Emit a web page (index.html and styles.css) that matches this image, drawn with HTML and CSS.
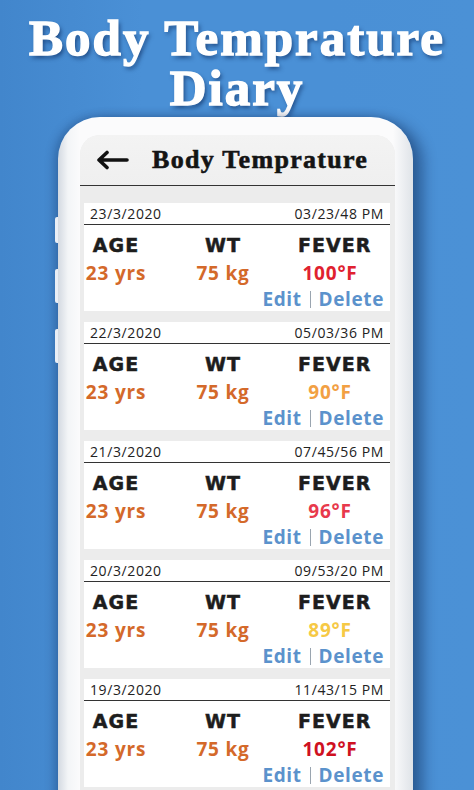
FILE: index.html
```html
<!DOCTYPE html>
<html lang="en">
<head>
    <meta charset="UTF-8">
    <meta name="viewport" content="width=device-width, initial-scale=1.0">
    <title>Body Temprature Diary</title>
    <link rel="stylesheet" href="styles.css">
</head>
<body>
    <h1 class="promo-title">
        <span class="promo-line">Body Temprature</span>
        <span class="promo-line">Diary</span>
    </h1>

    <div class="phone">
        <span class="side-button btn-one"></span>
        <span class="side-button btn-two"></span>
        <span class="side-button btn-three"></span>
        <div class="screen">
            <div class="app-bar">
                <svg class="back-arrow" width="34" height="20" viewBox="0 0 34 20">
                    <path d="M4 10 H32 M12 2.5 L4 10 L12 17.5" fill="none" stroke="#111" stroke-width="3.6" stroke-linecap="round" stroke-linejoin="round"/>
                </svg>
                <span class="app-title">Body Temprature</span>
            </div>

            <div class="entry-list">
                <div class="entry">
                    <div class="entry-head"><span>23/3/2020</span><span>03/23/48 PM</span></div>
                    <div class="entry-grid">
                        <span class="label">AGE</span><span class="label">WT</span><span class="label">FEVER</span>
                        <span class="value">23 yrs</span><span class="value">75 kg</span><span class="value fever-high">100°F</span>
                    </div>
                    <div class="actions"><span>Edit</span><span class="sep"></span><span>Delete</span></div>
                </div>

                <div class="entry">
                    <div class="entry-head"><span>22/3/2020</span><span>05/03/36 PM</span></div>
                    <div class="entry-grid">
                        <span class="label">AGE</span><span class="label">WT</span><span class="label">FEVER</span>
                        <span class="value">23 yrs</span><span class="value">75 kg</span><span class="value fever-mild">90°F</span>
                    </div>
                    <div class="actions"><span>Edit</span><span class="sep"></span><span>Delete</span></div>
                </div>

                <div class="entry">
                    <div class="entry-head"><span>21/3/2020</span><span>07/45/56 PM</span></div>
                    <div class="entry-grid">
                        <span class="label">AGE</span><span class="label">WT</span><span class="label">FEVER</span>
                        <span class="value">23 yrs</span><span class="value">75 kg</span><span class="value fever-warm">96°F</span>
                    </div>
                    <div class="actions"><span>Edit</span><span class="sep"></span><span>Delete</span></div>
                </div>

                <div class="entry">
                    <div class="entry-head"><span>20/3/2020</span><span>09/53/20 PM</span></div>
                    <div class="entry-grid">
                        <span class="label">AGE</span><span class="label">WT</span><span class="label">FEVER</span>
                        <span class="value">23 yrs</span><span class="value">75 kg</span><span class="value fever-low">89°F</span>
                    </div>
                    <div class="actions"><span>Edit</span><span class="sep"></span><span>Delete</span></div>
                </div>

                <div class="entry">
                    <div class="entry-head"><span>19/3/2020</span><span>11/43/15 PM</span></div>
                    <div class="entry-grid">
                        <span class="label">AGE</span><span class="label">WT</span><span class="label">FEVER</span>
                        <span class="value">23 yrs</span><span class="value">75 kg</span><span class="value fever-top">102°F</span>
                    </div>
                    <div class="actions"><span>Edit</span><span class="sep"></span><span>Delete</span></div>
                </div>
            </div>
        </div>
    </div>
</body>
</html>
```

FILE: styles.css
```css
body {
    margin: 0;
    height: 790px;
    overflow: hidden;
    background: linear-gradient(90deg, #4286cc 0, #4a90d6 30%, #4a90d6 70%, #4b91d6 100%);
    font-family: 'Open Sans', sans-serif;
}
.promo-title {
    margin: 13px 0 0;
    font-family: 'Liberation Serif', serif;
    font-weight: bold;
    font-size: 51px;
    letter-spacing: 2px;
    text-align: center;
    color: #fff;
    -webkit-text-stroke: 1.4px #fff;
    text-shadow: 2px 3px 4px rgba(10, 40, 90, 0.65);
}
.promo-line {
    display: block;
    height: 50px;
    line-height: 50px;
}
.phone {
    position: relative;
    width: 355px;
    margin: 4px 0 0 58px;
    padding: 18px 18px 0 22px;
    box-sizing: border-box;
    height: 700px;
    border-radius: 42px 42px 0 0;
    background: linear-gradient(90deg, #d3d9e1 0, #f3f5f7 10px, #fbfbfc 22px, #fbfbfc 335px, #dfe3e8 355px);
    box-shadow: 10px 4px 14px rgba(0, 20, 60, 0.4), -4px 0 10px rgba(0, 20, 60, 0.25);
}
.side-button {
    position: absolute;
    left: -3px;
    width: 3px;
    background: #e9eef5;
    border-radius: 2px 0 0 2px;
}
.btn-one { top: 100px; height: 26px; }
.btn-two { top: 152px; height: 34px; }
.btn-three { top: 212px; height: 34px; }
.screen {
    background: #ececec;
    border-radius: 20px 20px 0 0;
    height: 100%;
}
.app-bar {
    display: flex;
    align-items: center;
    height: 50px;
    padding-left: 15px;
    border-bottom: 1.5px solid #333;
    background: linear-gradient(#f3f3f3, #efefef);
    border-radius: 20px 20px 0 0;
}
.back-arrow {
    margin-right: 23px;
}
.app-title {
    font-family: 'Liberation Serif', serif;
    font-weight: bold;
    font-size: 26px;
    letter-spacing: 1.3px;
    color: #141414;
    -webkit-text-stroke: 0.6px #141414;
}
.entry-list {
    display: flex;
    flex-direction: column;
    gap: 11px;
    padding: 17px 5px 0 4px;
}
.entry {
    background: #fff;
}
.entry-head {
    display: flex;
    justify-content: space-between;
    height: 21px;
    line-height: 22px;
    padding: 0 6px;
    font-size: 14px;
    letter-spacing: 0.6px;
    color: #222;
    border-bottom: 1.5px solid #333;
}
.entry-grid {
    display: grid;
    grid-template-columns: 64px 150px 64px;
    padding-top: 8px;
    text-align: center;
}
.label {
    font-family: 'DejaVu Sans', sans-serif;
    font-weight: bold;
    font-size: 19px;
    line-height: 24px;
    letter-spacing: 1px;
    color: #1d1d1d;
    -webkit-text-stroke: 0.5px #1d1d1d;
    white-space: nowrap;
}
.value {
    margin-top: 4px;
    font-size: 19px;
    font-weight: 700;
    line-height: 24px;
    letter-spacing: 0.8px;
    color: #d4692a;
    white-space: nowrap;
}
.fever-high { color: #e0212f; }
.fever-mild { color: #f2a043; }
.fever-warm { color: #e8394c; }
.fever-low { color: #f6c945; }
.fever-top { color: #cf111f; }
.actions {
    display: flex;
    justify-content: flex-end;
    align-items: center;
    gap: 8px;
    margin-top: 2px;
    padding-right: 6px;
    font-size: 19px;
    font-weight: 700;
    line-height: 24px;
    letter-spacing: 0.6px;
    color: #5b92cc;
}
.sep {
    width: 1px;
    height: 17px;
    background: #9aa5b0;
}
```
